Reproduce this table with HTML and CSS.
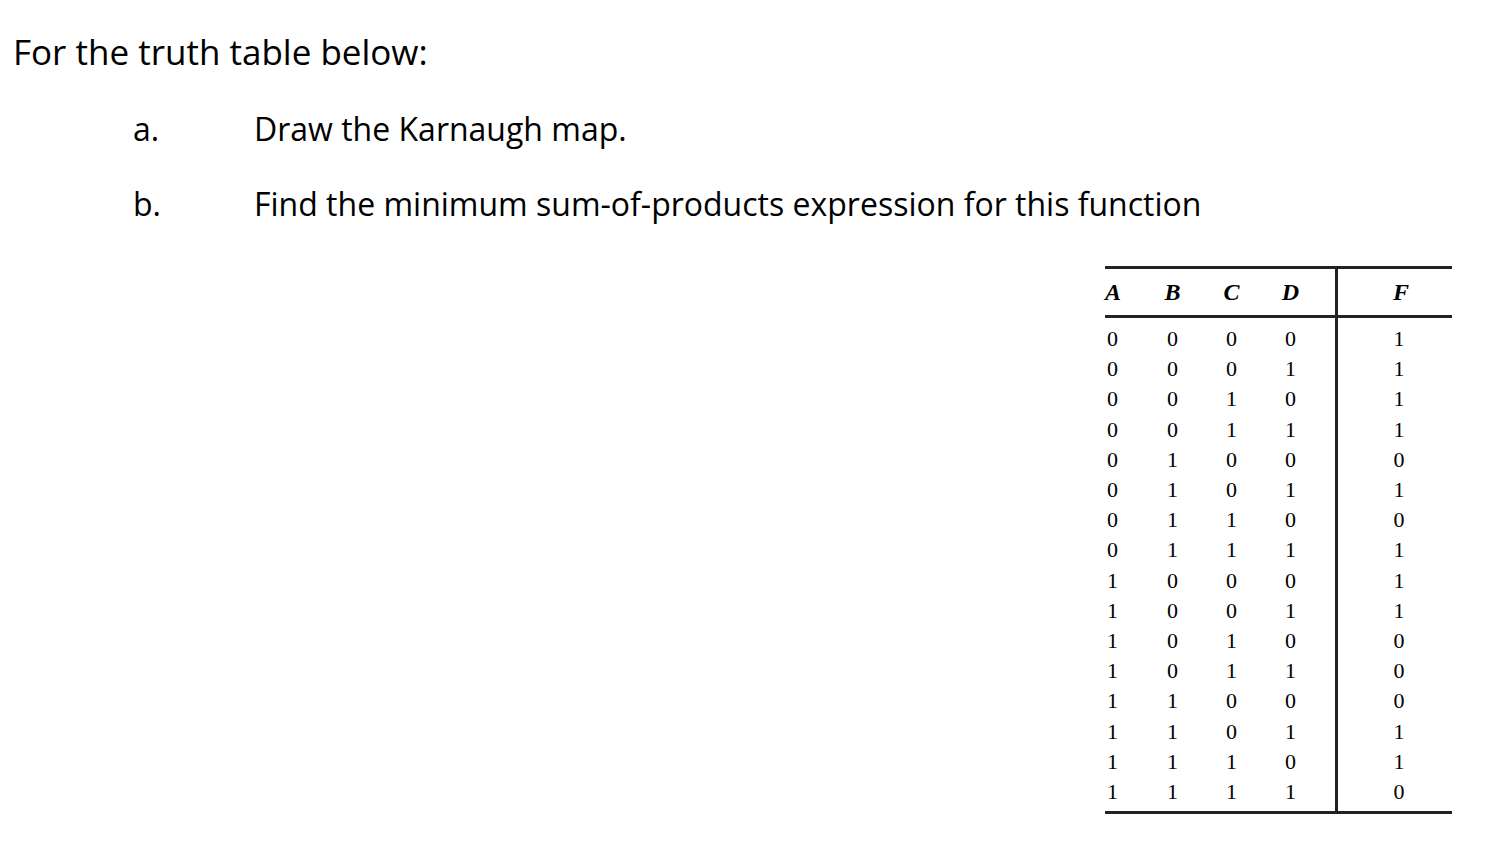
FILE: index.html
```html
<!DOCTYPE html>
<html>
<head>
<meta charset="utf-8">
<link rel="stylesheet" href="styles.css">
</head>
<body>
<div class="page">
  <p class="intro">For the truth table below:</p>
  <div class="item item-a"><span class="label">a.</span><span class="text">Draw the Karnaugh map.</span></div>
  <div class="item item-b"><span class="label">b.</span><span class="text">Find the minimum sum-of-products expression for this function</span></div>
  <div class="table-wrap">
    <div class="truth">
      <div class="inputs">
        <div class="head row"><span>A</span><span>B</span><span>C</span><span>D</span></div>
        <div class="body">
          <div class="row"><span>0</span><span>0</span><span>0</span><span>0</span></div>
          <div class="row"><span>0</span><span>0</span><span>0</span><span>1</span></div>
          <div class="row"><span>0</span><span>0</span><span>1</span><span>0</span></div>
          <div class="row"><span>0</span><span>0</span><span>1</span><span>1</span></div>
          <div class="row"><span>0</span><span>1</span><span>0</span><span>0</span></div>
          <div class="row"><span>0</span><span>1</span><span>0</span><span>1</span></div>
          <div class="row"><span>0</span><span>1</span><span>1</span><span>0</span></div>
          <div class="row"><span>0</span><span>1</span><span>1</span><span>1</span></div>
          <div class="row"><span>1</span><span>0</span><span>0</span><span>0</span></div>
          <div class="row"><span>1</span><span>0</span><span>0</span><span>1</span></div>
          <div class="row"><span>1</span><span>0</span><span>1</span><span>0</span></div>
          <div class="row"><span>1</span><span>0</span><span>1</span><span>1</span></div>
          <div class="row"><span>1</span><span>1</span><span>0</span><span>0</span></div>
          <div class="row"><span>1</span><span>1</span><span>0</span><span>1</span></div>
          <div class="row"><span>1</span><span>1</span><span>1</span><span>0</span></div>
          <div class="row"><span>1</span><span>1</span><span>1</span><span>1</span></div>
        </div>
      </div>
      <div class="output">
        <div class="head orow"><span>F</span></div>
        <div class="body">
          <div class="orow"><span>1</span></div>
          <div class="orow"><span>1</span></div>
          <div class="orow"><span>1</span></div>
          <div class="orow"><span>1</span></div>
          <div class="orow"><span>0</span></div>
          <div class="orow"><span>1</span></div>
          <div class="orow"><span>0</span></div>
          <div class="orow"><span>1</span></div>
          <div class="orow"><span>1</span></div>
          <div class="orow"><span>1</span></div>
          <div class="orow"><span>0</span></div>
          <div class="orow"><span>0</span></div>
          <div class="orow"><span>0</span></div>
          <div class="orow"><span>1</span></div>
          <div class="orow"><span>1</span></div>
          <div class="orow"><span>0</span></div>
        </div>
      </div>
    </div>
  </div>
</div>
</body>
</html>
```

FILE: styles.css
```css
html, body {
  margin: 0;
  padding: 0;
  background: #ffffff;
}
.page {
  display: flex;
  flex-direction: column;
  padding: 32px 0 0 13px;
  font-family: "Open Sans", "Noto Sans", sans-serif;
  font-size: 32px;
  color: #000;
}
.intro {
  margin: 0;
  font-size: 35px;
  line-height: 40px;
}
.item {
  display: flex;
  line-height: 40px;
}
.item-a {
  margin-top: 37px;
}
.item-b {
  margin-top: 35px;
}
.label {
  width: 121px;
  padding-left: 120px;
  flex: none;
}
.text {
  white-space: nowrap;
}
.table-wrap {
  display: flex;
  justify-content: flex-end;
  padding-right: 37px;
  margin-top: 42px;
}
.truth {
  display: flex;
  width: 347px;
  border-top: 3px solid #222;
  border-bottom: 3px solid #222;
  font-family: "Liberation Serif", "DejaVu Serif", serif;
  font-size: 22px;
  color: #000;
}
.inputs {
  width: 230px;
}
.output {
  flex: 1;
  border-left: 3px solid #222;
}
.head {
  height: 46px;
  border-bottom: 3px solid #222;
  font-weight: bold;
  font-style: italic;
  font-size: 24px;
  align-items: center;
}
.body {
  padding: 6px 0 4px;
}
.row {
  display: grid;
  grid-template-columns: 38px 59px 59px 59px;
  height: 30.2px;
  align-items: center;
}
.row span {
  text-align: center;
}
.row span:first-child {
  text-align: left;
  padding-left: 2px;
}
.head.row {
  height: 46px;
}
.head.row span:first-child {
  padding-left: 0;
}
.orow {
  display: flex;
  justify-content: center;
  align-items: center;
  height: 30.2px;
  padding-left: 8px;
}
.head.orow {
  height: 46px;
  padding-left: 12px;
}
```
